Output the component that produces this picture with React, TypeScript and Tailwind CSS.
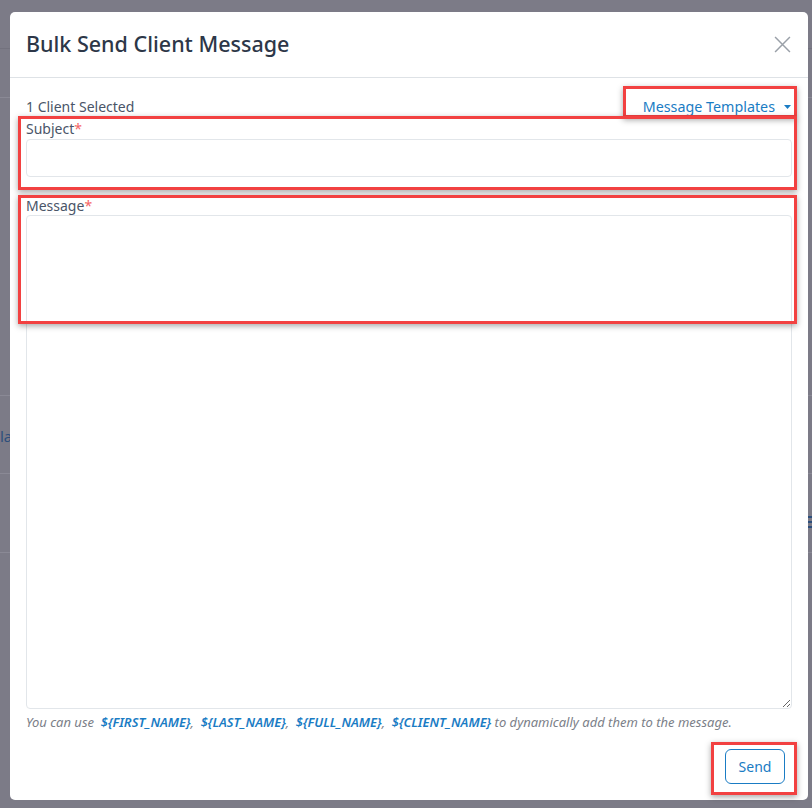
import React, { useState } from 'react';

const vars = ['${FIRST_NAME}', '${LAST_NAME}', '${FULL_NAME}', '${CLIENT_NAME}'];

const App: React.FC = () => {
  const [subject, setSubject] = useState('');
  const [message, setMessage] = useState('');

  return (
    <div className="relative h-[808px] w-[812px] overflow-hidden bg-[#7c7b87] font-['Noto_Sans',sans-serif]">
      {/* page behind the overlay */}
      <div className="absolute left-0 top-[48px] h-px w-full bg-[#73727e]" />
      <div className="absolute left-0 top-[97px] h-px w-full bg-[#8a8995]" />
      <div className="absolute left-0 top-[395px] h-px w-full bg-[#8a8995]" />
      <div className="absolute left-0 top-[473px] h-px w-full bg-[#8a8995]" />
      <div className="absolute left-0 top-[552px] h-px w-full bg-[#8a8995]" />
      <div className="absolute left-0 top-[425px] text-[15px] text-[#2d4f7c]">la</div>
      <div className="absolute right-0 top-[516px] flex w-[5px] flex-col gap-[3px]">
        <div className="h-[2px] bg-[#2d4f7c]" />
        <div className="h-[2px] bg-[#2d4f7c]" />
        <div className="h-[2px] bg-[#2d4f7c]" />
      </div>

      {/* modal */}
      <div className="relative ml-[10px] mt-[12px] flex h-[788px] w-[798px] flex-col rounded-[5px] bg-white">
        <div className="flex h-[66px] shrink-0 items-center justify-between border-b border-[#dee2e6] px-4">
          <h2 className="text-[21.5px] font-medium text-[#2d3748]">Bulk Send Client Message</h2>
          <button className="mr-[1px] text-[#9aa0a8]">
            <svg width="17" height="17" viewBox="0 0 16 16" fill="none" stroke="currentColor" strokeWidth="1.4">
              <path d="M1 1L15 15M15 1L1 15" />
            </svg>
          </button>
        </div>

        <div className="flex flex-1 flex-col px-4 pb-4 pt-[18px]">
          <div className="flex items-center justify-between text-[14px] leading-[21px]">
            <span className="text-[#4a5568]">1 Client Selected</span>
            <button className="mr-[1px] flex items-center gap-[9px] text-[14.3px] text-[#1a7cc4]">
              Message Templates
              <svg width="7" height="4" viewBox="0 0 7 4" fill="currentColor">
                <path d="M0 0H7L3.5 4Z" />
              </svg>
            </button>
          </div>

          <label className="mt-[1px] text-[14px] leading-[21px] text-[#4a5568]">
            Subject<span className="text-[#f56565]">*</span>
          </label>
          <input
            value={subject}
            onChange={(e) => setSubject(e.target.value)}
            className="mb-[19px] h-[38px] w-full rounded-[4px] border border-[#e2e6ea] px-3 text-[14px] outline-none"
          />

          <label className="text-[14px] leading-[19px] text-[#4a5568]">
            Message<span className="text-[#f56565]">*</span>
          </label>
          <textarea
            value={message}
            onChange={(e) => setMessage(e.target.value)}
            className="h-[494px] w-full resize-y rounded-[4px] border border-[#e2e6ea] px-3 py-2 text-[14px] outline-none"
          />
          <p className="mt-[3px] whitespace-pre text-[13px] italic leading-[20px] text-[#7b8088]">
            {'You can use  '}
            {vars.map((v, i) => (
              <React.Fragment key={v}>
                <span className="font-semibold text-[#1a7cc4]">{v}</span>
                {i < vars.length - 1 ? ',  ' : ' '}
              </React.Fragment>
            ))}
            to dynamically add them to the message.
          </p>

          <div className="mt-auto flex justify-end pr-[7px]">
            <button className="h-[35px] w-[60px] rounded-[6px] border border-[#1a7cc4] text-[14px] text-[#1a7cc4]">
              Send
            </button>
          </div>
        </div>

        {/* highlight boxes */}
        <div className="absolute left-[613px] top-[74px] h-[32px] w-[174px] border-[3px] border-[#f24141] shadow-[0_2px_6px_rgba(0,0,0,0.35)]" />
        <div className="absolute left-[8px] top-[104px] h-[74px] w-[779px] border-[3px] border-[#f24141] shadow-[0_2px_6px_rgba(0,0,0,0.35)]" />
        <div className="absolute left-[8px] top-[183px] h-[129px] w-[779px] border-[3px] border-[#f24141] shadow-[0_2px_6px_rgba(0,0,0,0.35)]" />
        <div className="absolute left-[701px] top-[730px] h-[53px] w-[86px] border-[3px] border-[#f24141] shadow-[0_2px_6px_rgba(0,0,0,0.35)]" />
      </div>
    </div>
  );
};

export default App;
